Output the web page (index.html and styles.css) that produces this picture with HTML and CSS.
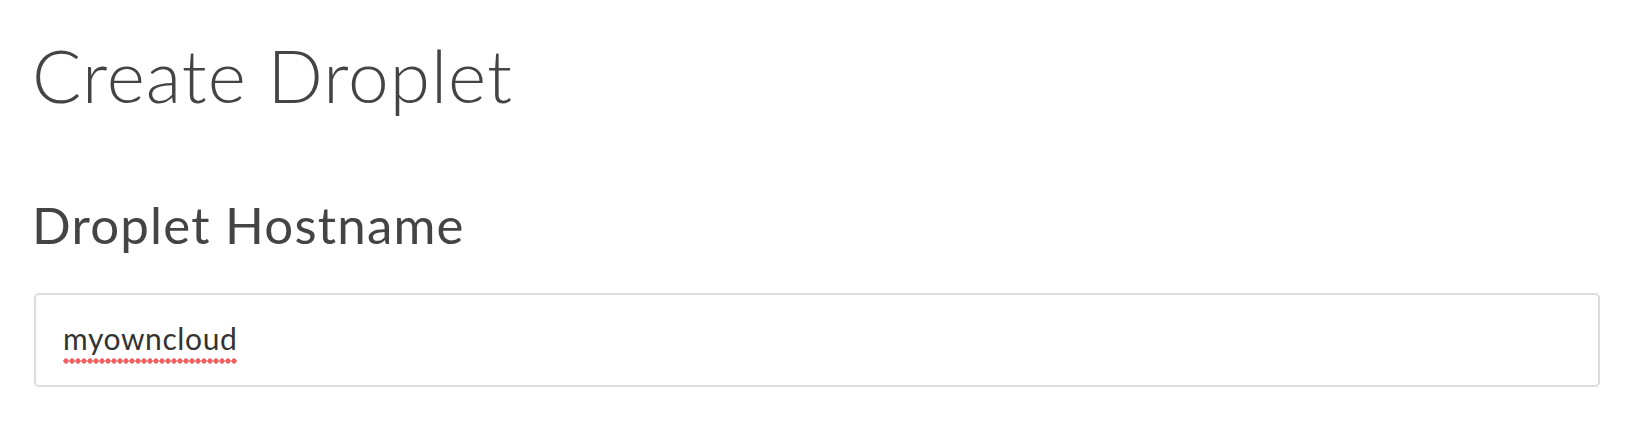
FILE: index.html
```html
<!DOCTYPE html>
<html lang="en">
<head>
    <meta charset="UTF-8">
    <title>Create Droplet</title>
    <link rel="stylesheet" href="styles.css">
</head>
<body>

<div class="container">
    <!-- Page title -->
    <h1 class="page-title">Create Droplet</h1>

    <!-- Hostname section -->
    <h2 class="section-title">Droplet Hostname</h2>
    <div class="field">
        <span class="field-value misspelled">myowncloud</span>
    </div>
</div>

</body>
</html>
```

FILE: styles.css
```css
body {
    font-family: Lato, "Open Sans", sans-serif;
    margin: 0;
    background-color: #fff;
    color: #444;
}
.container {
    padding: 0 38px 0 34px;
}
.page-title {
    font-size: 73px;
    font-weight: 300;
    line-height: 90px;
    letter-spacing: 1px;
    margin: 30px 0 0 -2px;
}
.section-title {
    font-size: 51px;
    font-weight: 400;
    line-height: 60px;
    letter-spacing: 1.2px;
    margin: 75px 0 0 -2px;
}
.field {
    margin-top: 38px;
    height: 90px;
    border: 2px solid #dcdcdc;
    border-radius: 5px;
    display: flex;
    align-items: center;
    padding-left: 27px;
}
.field-value {
    font-size: 30px;
    color: #333;
    line-height: 36px;
    letter-spacing: 0.6px;
    position: relative;
    top: 2px;
}
.misspelled {
    padding-bottom: 8px;
    background-image: radial-gradient(circle, #f26060 2.4px, transparent 2.9px);
    background-size: 6px 6px;
    background-repeat: repeat-x;
    background-position: 0 bottom;
}
```
